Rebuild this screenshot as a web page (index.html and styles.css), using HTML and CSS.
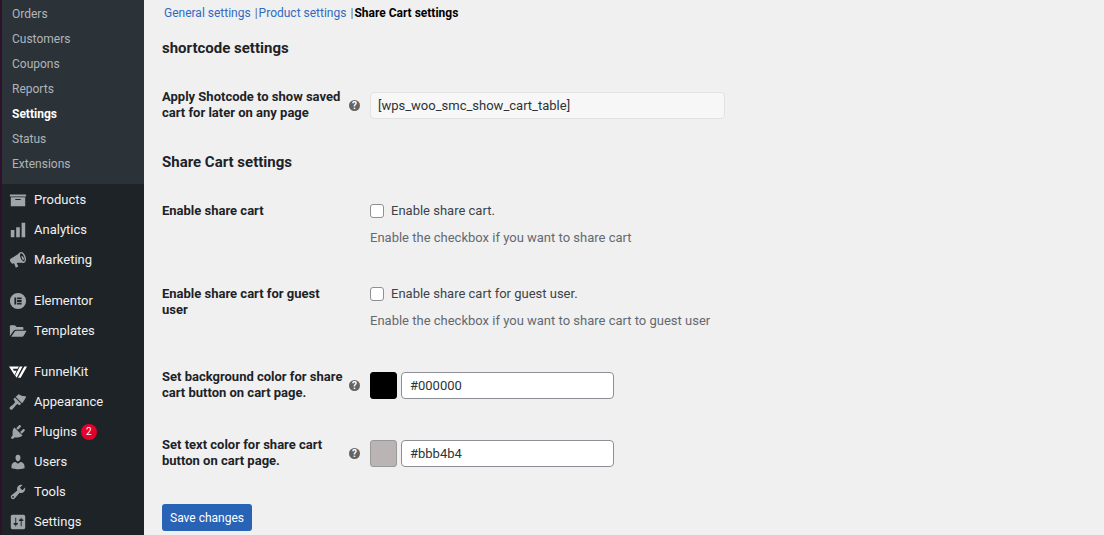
FILE: index.html
```html
<!DOCTYPE html>
<html lang="en">
<head>
<meta charset="utf-8">
<meta name="viewport" content="width=device-width, initial-scale=1">
<title>Share Cart settings</title>
<link rel="stylesheet" href="styles.css">
</head>
<body>
<div class="layout">
  <nav class="sidebar" aria-label="Main menu">
    <ul class="submenu">
      <li><a href="#">Orders</a></li>
      <li><a href="#">Customers</a></li>
      <li><a href="#">Coupons</a></li>
      <li><a href="#">Reports</a></li>
      <li><a href="#" class="current">Settings</a></li>
      <li><a href="#">Status</a></li>
      <li><a href="#">Extensions</a></li>
    </ul>
    <div class="menu">
      <ul class="menu-group">
        <li><a href="#"><svg class="icon" viewBox="0 0 20 20"><path d="M19 4v2H1V4h18zM2 7h16v10H2V7zm11 3V9H7v1h6z"/></svg>Products</a></li>
        <li><a href="#"><svg class="icon" viewBox="0 0 20 20"><path d="M18 18V2h-4v16h4zm-6 0V7H8v11h4zm-6 0v-8H2v8h4z"/></svg>Analytics</a></li>
        <li><a href="#"><svg class="icon" viewBox="0 0 20 20"><path fill-rule="evenodd" d="M18.2 5.9c.9 2.300.9 4.500-.1 6.100-.6 1-1.600 1.500-2.700 1.300-2.200-.4-4.900-.4-6.900.1l1.800 3.900-2.700 1.300-2-5.100-1.900.6C2.200 13.500 1 11.300 1 10.100c0-.8.4-1.500 1.100-1.900C6.600 6 9.700 3.900 11.200 2.200 11.800 1.500 12.700 1 13.700 1c1.900 0 3.600 2.300 4.500 4.900zm-1.300 5.800c.7-1.100.6-3.300-.1-5.200-.8-2-2.100-3.900-3.200-3.900-1.600 0-1.700 2.700-.5 5.500.9 2.100 2.600 3.900 3.800 3.600zM14.200 5.600c.9 0 1.800.9 2.200 2.200.3 1 .1 2.100-.4 2.400-.9-.6-2.100-2.500-2.200-4.500z"/></svg>Marketing</a></li>
      </ul>
      <ul class="menu-group">
        <li><a href="#"><svg class="icon" viewBox="0 0 20 20"><path fill-rule="evenodd" d="M10 1a9 9 0 1 1 0 18 9 9 0 0 1 0-18zM6 6v8h2V6H6zm3 0v2h5V6H9zm0 3v2h5V9H9zm0 3v2h5v-2H9z"/></svg>Elementor</a></li>
        <li><a href="#"><svg class="icon" viewBox="0 0 20 20"><path d="M1 15.500V4.500q0-1 1-1h4.500l2 2H15q1 0 1 1v2H7.500q-2 0-3 2L1 15.500zM2.500 16.500l3.500-5.500q.7-1.300 2-1.300H19.500L16.500 15q-.8 1.500-2 1.500z"/></svg>Templates</a></li>
      </ul>
      <ul class="menu-group">
        <li><a href="#"><svg class="icon icon-light" viewBox="0 0 20 20"><path d="M0 4h11L9.500 6.500H4.200l1.200 2.200h3L6.200 13.500 0 4zM12 4h3L8.500 16.500l-1.700-2.700L12 4zM17 4h3l-7 12.500h-3L17 4z"/></svg>FunnelKit</a></li>
        <li><a href="#"><svg class="icon" viewBox="0 0 20 20"><path d="M14.500 11.500L7.300 4.300C8.700 3.300 9.500 3 10.400 1.500c1.100.3 2 .9 3 1.300 1.800.8 4 .5 5.900 1.400-1.700 2.200-2.300 4.700-4.800 7.300zM6.500 5l7 7-1.700 1.700-2.700-1.400c-2 1.400-3.500 4.700-5.600 5.900-1 .6-2.200.3-2.700-.7-.3-.7 0-1.700.6-2.200 1.800-1.500 4.200-2.800 5.400-5.200L4.900 6.600 6.500 5z"/></svg>Appearance</a></li>
        <li><a href="#"><svg class="icon" viewBox="0 0 20 20"><path d="M13.110 4.360L9.870 7.600 8 5.730l3.240-3.240c.35-.34 1.050-.2 1.560.32.52.51.66 1.210.31 1.550zm-8 1.770l.91-1.120 9.010 9.010-1.190.84c-.71.71-2.630 1.160-3.820 1.160H6.140L4.900 17.260c-.59.590-1.540.590-2.120 0-.59-.58-.59-1.530 0-2.120l1.240-1.240v-3.880c0-1.130.4-3.190 1.090-3.890zm7.260 3.970l3.240-3.240c.34-.35 1.040-.21 1.550.31.52.51.66 1.210.31 1.550l-3.240 3.250-1.860-1.870z"/></svg>Plugins <span class="badge">2</span></a></li>
        <li><a href="#"><svg class="icon" viewBox="0 0 20 20"><path d="M10 9.250c-2.270 0-2.730-3.440-2.730-3.440C7 4.020 7.820 2 9.970 2c2.160 0 2.980 2.020 2.710 3.810 0 0-.41 3.440-2.680 3.440zm0 2.570L12.720 10c2.390 0 4.520 2.330 4.520 4.530v2.490s-3.650 1.130-7.240 1.130c-3.650 0-7.240-1.130-7.240-1.130v-2.490c0-2.250 1.940-4.480 4.470-4.480z"/></svg>Users</a></li>
        <li><a href="#"><svg class="icon" viewBox="0 0 20 20"><path d="M16.680 9.770c-1.340 1.340-3.300 1.670-4.950.99l-5.410 6.520c-.99.99-2.590.99-3.580 0s-.99-2.590 0-3.570l6.520-5.420c-.68-1.650-.35-3.610.99-4.950 1.280-1.280 3.120-1.620 4.720-1.060l-2.890 2.890 2.820 2.820 2.860-2.870c.53 1.580.18 3.390-1.080 4.650zM3.810 16.210c.4.390 1.040.390 1.430 0 .4-.4.4-1.040 0-1.430-.39-.4-1.030-.4-1.430 0-.39.390-.39 1.030 0 1.430z"/></svg>Tools</a></li>
        <li><a href="#"><svg class="icon" viewBox="0 0 20 20"><path fill-rule="evenodd" d="M18 16V4c0-1.100-.9-2-2-2H4c-1.100 0-2 .9-2 2v12c0 1.100.9 2 2 2h12c1.100 0 2-.9 2-2zM8 11h1c.550 0 1 .450 1 1s-.45 1-1 1H8v1.500c0 .280-.22.500-.5.500s-.5-.22-.5-.5V13H6c-.55 0-1-.45-1-1s.450-1 1-1h1V5.500c0-.28.220-.5.500-.5s.5.220.5.500V11zm5-2h-1c-.55 0-1-.45-1-1s.450-1 1-1h1V5.500c0-.28.220-.5.500-.5s.5.220.5.500V7h1c.550 0 1 .450 1 1s-.45 1-1 1h-1v5.500c0 .280-.22.500-.5.500s-.5-.22-.5-.5V9z"/></svg>Settings</a></li>
      </ul>
    </div>
  </nav>

  <main class="content">
    <nav class="tabs" aria-label="Settings sections">
      <a href="#">General settings</a><span class="divider">|</span><a href="#">Product settings</a><span class="divider">|</span><a href="#" class="current" aria-current="page">Share Cart settings</a>
    </nav>
    <form class="settings">
      <h2>shortcode settings</h2>
      <div class="row row-middle">
        <label class="name" for="shortcode">Apply Shotcode to show saved cart for later on any page</label>
        <span class="help" title="Help">?</span>
        <input class="text readonly" id="shortcode" type="text" value="[wps_woo_smc_show_cart_table]" readonly>
      </div>
      <h2>Share Cart settings</h2>
      <div class="row row-check">
        <span class="name">Enable share cart</span>
        <div class="field">
          <label class="check"><input type="checkbox">Enable share cart.</label>
          <p class="hint">Enable the checkbox if you want to share cart</p>
        </div>
      </div>
      <div class="row row-check">
        <span class="name">Enable share cart for guest user</span>
        <div class="field">
          <label class="check"><input type="checkbox">Enable share cart for guest user.</label>
          <p class="hint">Enable the checkbox if you want to share cart to guest user</p>
        </div>
      </div>
      <div class="row row-middle row-color">
        <label class="name" for="bg-color">Set background color for share cart button on cart page.</label>
        <span class="help" title="Help">?</span>
        <div class="color-field">
          <span class="swatch swatch-black"></span>
          <input class="text" id="bg-color" type="text" value="#000000">
        </div>
      </div>
      <div class="row row-middle row-color">
        <label class="name" for="text-color">Set text color for share cart button on cart page.</label>
        <span class="help" title="Help">?</span>
        <div class="color-field">
          <span class="swatch swatch-gray"></span>
          <input class="text" id="text-color" type="text" value="#bbb4b4">
        </div>
      </div>
      <button class="save" type="button">Save changes</button>
    </form>
  </main>
</div>
</body>
</html>
```
FILE: styles.css
```css
* {
  box-sizing: border-box;
}

body {
  margin: 0;
  background: #f0f0f0;
  color: #1d2327;
  font: 13px/16px Roboto, "Liberation Sans", sans-serif;
}

ul,
p,
h2 {
  margin: 0;
  padding: 0;
  list-style: none;
}

a {
  text-decoration: none;
}

.layout {
  display: flex;
  height: 100vh;
  overflow: hidden;
}

/* Sidebar */
.sidebar {
  flex: 0 0 144px;
  border-left: 2px solid #2c1228;
  background: #1d2327;
}

.submenu {
  padding: 2px 0 7px;
  background: #2c3338;
}

.submenu a {
  display: block;
  padding-left: 10px;
  color: #b0b4b8;
  font-size: 12px;
  line-height: 25px;
}

.submenu .current {
  color: #fff;
  font-weight: 700;
}

.menu {
  display: flex;
  flex-direction: column;
  gap: 11px;
  padding-top: 1px;
}

.menu-group a {
  display: flex;
  align-items: center;
  height: 30px;
  padding-left: 7px;
  color: #f0f0f1;
}

.icon {
  width: 18px;
  height: 18px;
  margin-right: 7px;
  fill: #a0a5aa;
}

.icon-light {
  fill: #fff;
}

.badge {
  width: 16px;
  height: 16px;
  margin-left: 4px;
  border-radius: 8px;
  background: #e4002b;
  color: #fff;
  font-size: 10px;
  text-align: center;
}

/* Content */
.content {
  flex: 1;
  padding: 5px 18px 4px;
}

.tabs {
  display: flex;
  padding-left: 2px;
  color: #646970;
  font-size: 12px;
}

.tabs a {
  color: #2f6bc2;
}

.tabs .current {
  color: #000;
  font-weight: 700;
}

.divider {
  margin: 0 1px 0 4px;
}

h2 {
  padding: 18px 0;
  font-size: 15px;
  line-height: 18px;
}

.row {
  display: grid;
  grid-template-columns: 183px 25px minmax(0, 355px);
  padding: 14px 0;
}

.row-middle {
  align-items: center;
}

.name {
  font-weight: 700;
}

.help {
  width: 11px;
  height: 11px;
  margin-left: 4px;
  border-radius: 6px;
  background: #646464;
  color: #fff;
  font-size: 10px;
  font-weight: 700;
  line-height: 11px;
  text-align: center;
}

.text {
  width: 100%;
  height: 27px;
  padding: 0 8px;
  border: 1px solid #8c8f94;
  border-radius: 4px;
  background: #fff;
  color: #2c3338;
  font: inherit;
}

.readonly {
  padding: 0 7px;
  border-color: #e2e2e3;
  background: #f7f7f7;
}

.row-check {
  padding-bottom: 26px;
}

.row-color {
  padding-bottom: 22px;
}

.field {
  grid-column: 3;
}

.check {
  display: flex;
  align-items: center;
  gap: 7px;
  color: #3c434a;
}

.check input {
  appearance: none;
  width: 14px;
  height: 14px;
  margin: 0;
  border: 1px solid #8c8f94;
  border-radius: 3px;
  background: #fff;
}

.hint {
  margin-top: 11px;
  color: #646970;
}

.color-field {
  display: flex;
  gap: 4px;
}

.color-field .text {
  width: 213px;
}

.swatch {
  width: 27px;
  height: 27px;
  border: 1px solid #999;
  border-radius: 3px;
}

.swatch-black {
  border-color: #000;
  background: #000;
}

.swatch-gray {
  background: #bbb4b4;
}

.save {
  display: block;
  height: 27px;
  margin-top: 13px;
  padding: 0 8px;
  border: 0;
  border-radius: 3px;
  background: #2863b5;
  color: #fff;
  font: inherit;
  font-size: 12px;
}
```
